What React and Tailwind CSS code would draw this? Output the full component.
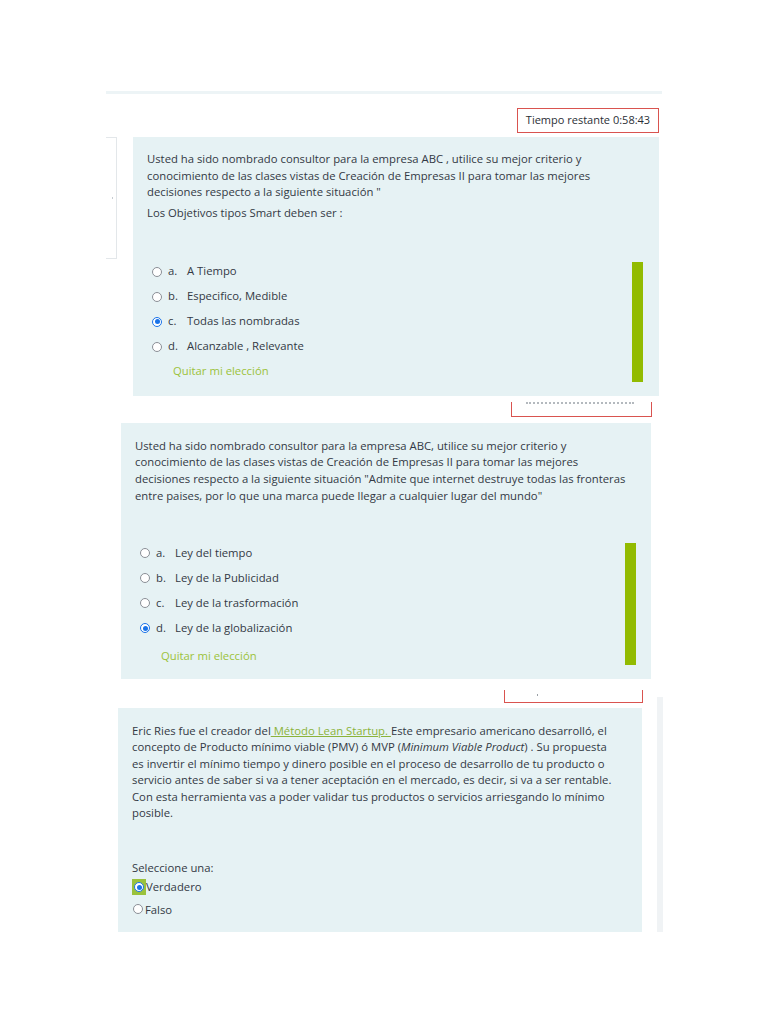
import React from 'react';

const font = { fontFamily: '"Open Sans", "Noto Sans", Arial, sans-serif' };

function Radio({ checked }) {
  return (
    <span
      className={
        'inline-flex h-[10px] w-[10px] shrink-0 items-center justify-center rounded-full border ' +
        (checked ? 'border-[#1a73e8] bg-white' : 'border-[#8a8f96] bg-white')
      }
    >
      {checked && <span className="h-[5px] w-[5px] rounded-full bg-[#1a73e8]" />}
    </span>
  );
}

function Option({ letter, label, checked }) {
  return (
    <div className="flex h-[25px] items-center">
      <Radio checked={checked} />
      <span className="ml-[6px] w-[19px]">{letter}</span>
      <span>{label}</span>
    </div>
  );
}

// timer box of the next screenshot, only its lower edge is visible
function TimerEdge({ className }) {
  return (
    <div className={'border-x border-b border-[#d9534f] ' + className}>
      <div className="ml-[14px] mt-[6px] w-[108px] border-t-2 border-dotted border-[#b4b9be]" />
    </div>
  );
}

export default function App() {
  return (
    <div className="min-h-[1024px] w-full bg-white pt-[91px] text-[11.3px] text-[#333944]" style={font}>
      <div className="ml-[106px] h-[3px] w-[556px] bg-[#edf4f6]" />

      <div className="ml-[517px] mt-[14px] flex h-[25px] w-[142px] items-center justify-center border border-[#d9534f] text-[11px] text-[#2b2f36]">
        Tiempo restante 0:58:43
      </div>

      {/* question 1 */}
      <div className="mt-[4px] flex items-start">
        <div className="ml-[106px] flex h-[122px] w-[11px] items-center justify-end border-y border-r border-[#e3e7ea] bg-white">
          <span className="mr-[3px] h-[2px] w-[1px] bg-[#c7ccd1]" />
        </div>
        <div className="ml-[16px] h-[259px] w-[526px] bg-[#e6f2f4] pl-[14px] pt-[14px]">
          <div className="leading-[16.5px]">
            <div>Usted ha sido nombrado consultor para la empresa ABC , utilice su mejor criterio y</div>
            <div>conocimiento de las clases vistas de Creación de Empresas II para tomar las mejores</div>
            <div>decisiones respecto a la siguiente situación "</div>
            <div className="mt-[4.5px]">Los Objetivos tipos Smart deben ser :</div>
          </div>
          <div className="mt-[37.5px] flex justify-between pr-[16px]">
            <div className="pl-[5px]">
              <Option letter="a." label="A Tiempo" />
              <Option letter="b." label="Especifico, Medible" />
              <Option letter="c." label="Todas las nombradas" checked />
              <Option letter="d." label="Alcanzable , Relevante" />
              <div className="flex h-[25px] items-center pl-[21px] text-[#9cc23a]">Quitar mi elección</div>
            </div>
            <div className="mt-[2.5px] h-[120px] w-[11px] bg-[#92bb00]" />
          </div>
        </div>
      </div>

      {/* question 2 */}
      <TimerEdge className="ml-[511px] mt-[6px] h-[15px] w-[141px]" />
      <div className="ml-[121px] mt-[6px] h-[256px] w-[530px] bg-[#e6f2f4] pl-[14px] pt-[14.5px]">
        <div className="leading-[16.7px]">
          <div>Usted ha sido nombrado consultor para la empresa ABC, utilice su mejor criterio y</div>
          <div>conocimiento de las clases vistas de Creación de Empresas II para tomar las mejores</div>
          <div>decisiones respecto a la siguiente situación "Admite que internet destruye todas las fronteras</div>
          <div>entre paises, por lo que una marca puede llegar a cualquier lugar del mundo"</div>
        </div>
        <div className="mt-[36.5px] flex justify-between pr-[15px]">
          <div className="pl-[5px]">
            <Option letter="a." label="Ley del tiempo" />
            <Option letter="b." label="Ley de la Publicidad" />
            <Option letter="c." label="Ley de la trasformación" />
            <Option letter="d." label="Ley de la globalización" checked />
            <div className="mt-[3px] flex h-[25px] items-center pl-[21px] text-[#9cc23a]">Quitar mi elección</div>
          </div>
          <div className="mt-[2.5px] h-[122px] w-[11px] bg-[#92bb00]" />
        </div>
      </div>

      {/* question 3 */}
      <div className="mt-[11px] flex items-end">
        <div className="ml-[118px] flex flex-col">
          <div className="ml-[386px] flex h-[13px] w-[139px] justify-start border-x border-b border-[#d9534f]">
            <span className="ml-[32px] mt-[4px] h-[2px] w-[1px] bg-[#9aa0a6]" />
          </div>
          <div className="mt-[5px] h-[224px] w-[524px] bg-[#e6f2f4] pl-[14px] pt-[15px]">
            <div className="leading-[16.4px]">
              <div>
                Eric Ries fue el creador del
                <span className="text-[#8bb33a] underline"> Método Lean Startup. </span>
                Este empresario americano desarrolló, el
              </div>
              <div>
                concepto de Producto mínimo viable (PMV) ó MVP (<i>Minimum Viable Product</i>) . Su propuesta
              </div>
              <div>es invertir el mínimo tiempo y dinero posible en el proceso de desarrollo de tu producto o</div>
              <div>servicio antes de saber si va a tener aceptación en el mercado, es decir, si va a ser rentable.</div>
              <div>Con esta herramienta vas a poder validar tus productos o servicios arriesgando lo mínimo</div>
              <div>posible.</div>
            </div>
            <div className="mt-[39px] leading-[16.4px]">Seleccione una:</div>
            <div className="mt-[2.5px] flex h-[16px] items-center">
              <span className="flex h-[16px] w-[14px] items-center justify-center bg-[#9ac23c]">
                <Radio checked />
              </span>
              <span>Verdadero</span>
            </div>
            <div className="mt-[7px] flex h-[16px] items-center">
              <span className="ml-[1px] mr-[2px]">
                <Radio />
              </span>
              <span>Falso</span>
            </div>
          </div>
        </div>
        <div className="ml-[14px] h-[235px] w-[6px] bg-[#f0f3f5]" />
      </div>
    </div>
  );
}
